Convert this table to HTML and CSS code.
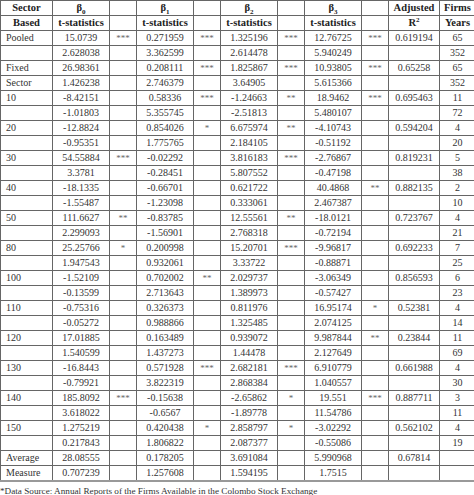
FILE: index.html
```html
<!DOCTYPE html>
<html>
<head>
<meta charset="utf-8">
<link rel="stylesheet" href="styles.css">
</head>
<body>
<table class="tbl">
<colgroup>
<col class="c-lab"><col class="c-num"><col class="c-st"><col class="c-num"><col class="c-st"><col class="c-num"><col class="c-st"><col class="c-num"><col class="c-st"><col class="c-adj"><col class="c-firm">
</colgroup>
<thead>
<tr class="h1"><th>Sector</th><th class="beta">β<sub>0</sub></th><th></th><th class="beta">β<sub>1</sub></th><th></th><th class="beta">β<sub>2</sub></th><th></th><th class="beta">β<sub>3</sub></th><th></th><th>Adjusted</th><th>Firms</th></tr>
<tr class="h2"><th>Based</th><th>t-statistics</th><th></th><th>t-statistics</th><th></th><th>t-statistics</th><th></th><th>t-statistics</th><th></th><th>R<sup>2</sup></th><th>Years</th></tr>
</thead>
<tbody>
<tr><td class="lab">Pooled</td><td>15.0739</td><td class="st">***</td><td>0.271959</td><td class="st">***</td><td>1.325196</td><td class="st">***</td><td>12.76725</td><td class="st">***</td><td>0.619194</td><td>65</td></tr>
<tr><td class="lab"></td><td>2.628038</td><td class="st"></td><td>3.362599</td><td class="st"></td><td>2.614478</td><td class="st"></td><td>5.940249</td><td class="st"></td><td></td><td>352</td></tr>
<tr><td class="lab">Fixed</td><td>26.98361</td><td class="st"></td><td>0.208111</td><td class="st">***</td><td>1.825867</td><td class="st">***</td><td>10.93805</td><td class="st">***</td><td>0.65258</td><td>65</td></tr>
<tr><td class="lab">Sector</td><td>1.426238</td><td class="st"></td><td>2.746379</td><td class="st"></td><td>3.64905</td><td class="st"></td><td>5.615366</td><td class="st"></td><td></td><td>352</td></tr>
<tr><td class="lab">10</td><td>-8.42151</td><td class="st"></td><td>0.58336</td><td class="st">***</td><td>-1.24663</td><td class="st">**</td><td>18.9462</td><td class="st">***</td><td>0.695463</td><td>11</td></tr>
<tr><td class="lab"></td><td>-1.01803</td><td class="st"></td><td>5.355745</td><td class="st"></td><td>-2.51813</td><td class="st"></td><td>5.480107</td><td class="st"></td><td></td><td>72</td></tr>
<tr><td class="lab">20</td><td>-12.8824</td><td class="st"></td><td>0.854026</td><td class="st">*</td><td>6.675974</td><td class="st">**</td><td>-4.10743</td><td class="st"></td><td>0.594204</td><td>4</td></tr>
<tr><td class="lab"></td><td>-0.95351</td><td class="st"></td><td>1.775765</td><td class="st"></td><td>2.184105</td><td class="st"></td><td>-0.51192</td><td class="st"></td><td></td><td>20</td></tr>
<tr><td class="lab">30</td><td>54.55884</td><td class="st">***</td><td>-0.02292</td><td class="st"></td><td>3.816183</td><td class="st">***</td><td>-2.76867</td><td class="st"></td><td>0.819231</td><td>5</td></tr>
<tr><td class="lab"></td><td>3.3781</td><td class="st"></td><td>-0.28451</td><td class="st"></td><td>5.807552</td><td class="st"></td><td>-0.47198</td><td class="st"></td><td></td><td>38</td></tr>
<tr><td class="lab">40</td><td>-18.1335</td><td class="st"></td><td>-0.66701</td><td class="st"></td><td>0.621722</td><td class="st"></td><td>40.4868</td><td class="st">**</td><td>0.882135</td><td>2</td></tr>
<tr><td class="lab"></td><td>-1.55487</td><td class="st"></td><td>-1.23098</td><td class="st"></td><td>0.333061</td><td class="st"></td><td>2.467387</td><td class="st"></td><td></td><td>10</td></tr>
<tr><td class="lab">50</td><td>111.6627</td><td class="st">**</td><td>-0.83785</td><td class="st"></td><td>12.55561</td><td class="st">**</td><td>-18.0121</td><td class="st"></td><td>0.723767</td><td>4</td></tr>
<tr><td class="lab"></td><td>2.299093</td><td class="st"></td><td>-1.56901</td><td class="st"></td><td>2.768318</td><td class="st"></td><td>-0.72194</td><td class="st"></td><td></td><td>21</td></tr>
<tr><td class="lab">80</td><td>25.25766</td><td class="st">*</td><td>0.200998</td><td class="st"></td><td>15.20701</td><td class="st">***</td><td>-9.96817</td><td class="st"></td><td>0.692233</td><td>7</td></tr>
<tr><td class="lab"></td><td>1.947543</td><td class="st"></td><td>0.932061</td><td class="st"></td><td>3.33722</td><td class="st"></td><td>-0.88871</td><td class="st"></td><td></td><td>25</td></tr>
<tr><td class="lab">100</td><td>-1.52109</td><td class="st"></td><td>0.702002</td><td class="st">**</td><td>2.029737</td><td class="st"></td><td>-3.06349</td><td class="st"></td><td>0.856593</td><td>6</td></tr>
<tr><td class="lab"></td><td>-0.13599</td><td class="st"></td><td>2.713643</td><td class="st"></td><td>1.389973</td><td class="st"></td><td>-0.57427</td><td class="st"></td><td></td><td>23</td></tr>
<tr><td class="lab">110</td><td>-0.75316</td><td class="st"></td><td>0.326373</td><td class="st"></td><td>0.811976</td><td class="st"></td><td>16.95174</td><td class="st">*</td><td>0.52381</td><td>4</td></tr>
<tr><td class="lab"></td><td>-0.05272</td><td class="st"></td><td>0.988866</td><td class="st"></td><td>1.325485</td><td class="st"></td><td>2.074125</td><td class="st"></td><td></td><td>14</td></tr>
<tr><td class="lab">120</td><td>17.01885</td><td class="st"></td><td>0.163489</td><td class="st"></td><td>0.939072</td><td class="st"></td><td>9.987844</td><td class="st">**</td><td>0.23844</td><td>11</td></tr>
<tr><td class="lab"></td><td>1.540599</td><td class="st"></td><td>1.437273</td><td class="st"></td><td>1.44478</td><td class="st"></td><td>2.127649</td><td class="st"></td><td></td><td>69</td></tr>
<tr><td class="lab">130</td><td>-16.8443</td><td class="st"></td><td>0.571928</td><td class="st">***</td><td>2.682181</td><td class="st">***</td><td>6.910779</td><td class="st"></td><td>0.661988</td><td>4</td></tr>
<tr><td class="lab"></td><td>-0.79921</td><td class="st"></td><td>3.822319</td><td class="st"></td><td>2.868384</td><td class="st"></td><td>1.040557</td><td class="st"></td><td></td><td>30</td></tr>
<tr><td class="lab">140</td><td>185.8092</td><td class="st">***</td><td>-0.15638</td><td class="st"></td><td>-2.65862</td><td class="st">*</td><td>19.551</td><td class="st">***</td><td>0.887711</td><td>3</td></tr>
<tr><td class="lab"></td><td>3.618022</td><td class="st"></td><td>-0.6567</td><td class="st"></td><td>-1.89778</td><td class="st"></td><td>11.54786</td><td class="st"></td><td></td><td>11</td></tr>
<tr><td class="lab">150</td><td>1.275219</td><td class="st"></td><td>0.420438</td><td class="st">*</td><td>2.858797</td><td class="st">*</td><td>-3.02292</td><td class="st"></td><td>0.562102</td><td>4</td></tr>
<tr><td class="lab"></td><td>0.217843</td><td class="st"></td><td>1.806822</td><td class="st"></td><td>2.087377</td><td class="st"></td><td>-0.55086</td><td class="st"></td><td></td><td>19</td></tr>
<tr><td class="lab">Average</td><td>28.08555</td><td class="st"></td><td>0.178205</td><td class="st"></td><td>3.691084</td><td class="st"></td><td>5.990968</td><td class="st"></td><td>0.67814</td><td></td></tr>
<tr class="last"><td class="lab">Measure</td><td>0.707239</td><td class="st"></td><td>1.257608</td><td class="st"></td><td>1.594195</td><td class="st"></td><td>1.7515</td><td class="st"></td><td></td><td></td></tr>
</tbody>
</table>
<p class="note">*Data Source: Annual Reports of the Firms Available in the Colombo Stock Exchange</p>
</body>
</html>
```
FILE: styles.css
```css
html, body {
  margin: 0;
  padding: 0;
  background: #fff;
}
body {
  font-family: "Liberation Serif", "Times New Roman", serif;
  color: #333;
  width: 474px;
}
.tbl {
  border-collapse: collapse;
  table-layout: fixed;
  width: 474px;
  font-size: 10px;
}
.c-lab { width: 52px; }
.c-num { width: 57px; }
.c-st { width: 27px; }
.c-adj { width: 51px; }
.c-firm { width: 36px; }
.tbl th, .tbl td {
  border: 1px solid #666;
  height: 14px;
  padding: 0;
  line-height: 14px;
  text-align: center;
  white-space: nowrap;
  overflow: hidden;
}
.tbl th {
  font-weight: bold;
  color: #222;
  font-size: 10.5px;
}
.tbl td.lab {
  text-align: left;
  padding-left: 5px;
}
.tbl td.st {
  color: #666;
  font-size: 9px;
}
.beta {
  font-weight: normal;
}
.tbl sub, .tbl sup {
  font-size: 7px;
  line-height: 0;
}
.tbl tr.last td {
  border-bottom: 2px solid #999;
}
.note {
  margin: 3px 0 0 0;
  font-size: 9.2px;
  line-height: 12px;
  color: #333;
}
```
